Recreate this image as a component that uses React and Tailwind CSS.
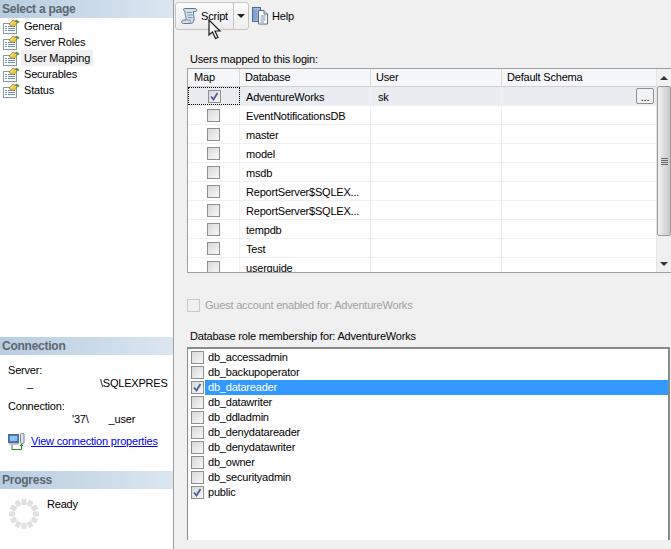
import React from 'react';

const pages = ['General', 'Server Roles', 'User Mapping', 'Securables', 'Status'];
const databases = ['AdventureWorks', 'EventNotificationsDB', 'master', 'model', 'msdb', 'ReportServer$SQLEX...', 'ReportServer$SQLEX...', 'tempdb', 'Test', 'userguide'];
const roles = ['db_accessadmin', 'db_backupoperator', 'db_datareader', 'db_datawriter', 'db_ddladmin', 'db_denydatareader', 'db_denydatawriter', 'db_owner', 'db_securityadmin', 'public'];

// small property page glyph from the sidebar
const PageIcon = () => (
  <svg width="17" height="15" viewBox="0 0 17 15" className="shrink-0">
    <rect x="0.5" y="4.5" width="13" height="10" fill="#fff" stroke="#8a97a8" />
    <path d="M2 7.5h2M5 7.5h7M2 9.5h2M5 9.5h7M2 11.5h2M5 11.5h7" stroke="#6f8fc0" />
    <path d="M6 5.5L10 1L14.5 3.5L10.5 8Z" fill="#f2c63e" stroke="#8a7326" strokeWidth="0.7" />
    <path d="M7.5 5L10.5 2" stroke="#fff3b0" />
    <path d="M13 0.5L16.5 2.5L15 4.5L12 2.5Z" fill="#4f9a3a" />
  </svg>
);

const ScriptIcon = () => (
  <svg width="17" height="18" viewBox="0 0 17 18">
    <path d="M3.5 1.5H14C16 1.5 16.5 4.5 14.5 4.5H12.5C12 7 13.5 10 13 13C12.7 15 11.5 16.5 9.5 16.5H2.5C0 16.5 0 13 2.5 13H5C5.5 10 3.5 7 4 4.5C2.5 4 2 1.5 3.5 1.5Z" fill="#d5dee8" stroke="#5f7690" />
    <path d="M6 5.5H11M6.5 8H11.5M7 10.5H11.5M5.5 13H9.5C9 14 9 15.5 9.5 16.5" fill="none" stroke="#7f95ad" />
  </svg>
);

const HelpIcon = () => (
  <svg width="17" height="18" viewBox="0 0 17 18">
    <rect x="0.5" y="0.5" width="8" height="14" fill="#9db7dc" stroke="#4a6a9c" />
    <path d="M2 2.5V13M4 2.5V13" stroke="#6d8cbc" />
    <path d="M6.5 3.5H12L15.5 7V17H6.5Z" fill="#fff" stroke="#5a6a80" />
    <path d="M12 3.5V7H15.5" fill="#dfe6f0" stroke="#5a6a80" />
    <path d="M8.5 9H13.5M8.5 11H13.5M8.5 13H13.5M8.5 15H12" stroke="#8090a8" />
  </svg>
);

const Cursor = () => (
  <svg width="15" height="21" viewBox="0 0 15 21" className="absolute left-[208px] top-[19px]">
    <path d="M1 1V16L4.5 13L7.5 19.5L10 18.5L7 12H12Z" fill="#f4f4f4" stroke="#1c1c1c" strokeWidth="1.2" />
  </svg>
);

const ConnectionIcon = () => (
  <svg width="17" height="17" viewBox="0 0 17 17" className="shrink-0">
    <rect x="0.5" y="1.5" width="10" height="8" fill="#3f7fd0" stroke="#59677a" />
    <rect x="2" y="3" width="7" height="5" fill="#8fc0f0" />
    <rect x="1" y="10" width="10" height="2" fill="#b8c0cc" />
    <rect x="12.5" y="0.5" width="3.5" height="10" rx="1" fill="#dfe4ea" stroke="#77818f" />
    <path d="M4 12V16.5H13.5V12" fill="none" stroke="#2d8a2d" />
    <path d="M11.5 13L13.5 10.5L15.5 13Z" fill="#2d8a2d" />
  </svg>
);

const Spinner = () => (
  <svg width="32" height="32" viewBox="0 0 32 32" className="shrink-0">
    {Array.from({ length: 12 }).map((_, i) => (
      <rect key={i} x="13.5" y="1" width="5" height="6" rx="1" fill="#e0e0e0" transform={`rotate(${i * 30} 16 16)`} />
    ))}
  </svg>
);

const Check = ({ checked, disabled }) => (
  <span className={`flex h-[13px] w-[13px] shrink-0 items-center justify-center border ${disabled ? 'border-[#c8c8c8] bg-[#f0f0f0]' : 'border-[#8e8f8f] bg-gradient-to-br from-[#d8d8d8] to-[#f8f8f8]'}`}>
    {checked && (
      <svg width="9" height="9" viewBox="0 0 9 9">
        <path d="M1 4.5L3.5 7.5L7.5 1" fill="none" stroke="#4a5f97" strokeWidth="1.8" />
      </svg>
    )}
  </span>
);

const SectionHeader = ({ children }) => (
  <div className="flex h-[18px] items-center bg-gradient-to-r from-[#b9cde0] to-[#dbe6f1] pl-[2px] text-[12px] font-bold tracking-[-0.25px] text-[#5a6672]">
    {children}
  </div>
);

const Sidebar = () => (
  <aside className="flex h-[549px] w-[173px] shrink-0 flex-col bg-white">
    <SectionHeader>Select a page</SectionHeader>
    <ul className="flex flex-col">
      {pages.map((page) => (
        <li key={page} className="flex h-[16px] items-center gap-[1px] pl-[3px]">
          <PageIcon />
          <span className={`px-[3px] ${page === 'User Mapping' ? 'bg-[#f0f0f0]' : ''}`}>{page}</span>
        </li>
      ))}
    </ul>
    <div className="mt-auto">
      <SectionHeader>Connection</SectionHeader>
      <div className="flex h-[116px] flex-col pl-[8px] pt-[9px]">
        <div className="h-[13px] leading-[13px]">Server:</div>
        <div className="flex h-[13px] leading-[13px]">
          <span className="ml-[19px]">_</span>
          <span className="ml-[67px]">\SQLEXPRES</span>
        </div>
        <div className="mt-[10px] h-[13px] leading-[13px]">Connection:</div>
        <div className="flex h-[13px] leading-[13px]">
          <span className="ml-[64px]">'37\</span>
          <span className="ml-[20px]">_user</span>
        </div>
        <div className="mt-[7px] flex items-center gap-[6px]">
          <ConnectionIcon />
          <a className="text-[#0000ee] underline">View connection properties</a>
        </div>
      </div>
      <SectionHeader>Progress</SectionHeader>
      <div className="flex h-[60px] gap-[7px] pl-[8px] pt-[9px]">
        <Spinner />
        <span className="mt-[-1px] leading-[14px]">Ready</span>
      </div>
    </div>
  </aside>
);

const Toolbar = () => (
  <div className="flex h-[32px] items-center pl-[1px]">
    <div className="flex h-[28px] w-[74px] rounded-[3px] border border-[#c4c4c4] bg-gradient-to-b from-[#fafafa] to-[#eeeeee]">
      <div className="flex w-[58px] items-center gap-[3px] border-r border-[#c4c4c4] pl-[5px]">
        <ScriptIcon />
        <span>Script</span>
      </div>
      <div className="flex flex-1 items-center justify-center">
        <span className="h-0 w-0 border-x-[4px] border-t-[4px] border-x-transparent border-t-[#222]" />
      </div>
    </div>
    <div className="ml-[3px] flex items-center gap-[3px]">
      <HelpIcon />
      <span>Help</span>
    </div>
  </div>
);

const MappingGrid = () => (
  <div className="ml-[13px] flex h-[205px] w-[484px] overflow-hidden border-y border-l border-[#a0a0a0] bg-white">
    <div className="flex min-w-0 flex-1 flex-col">
      <div className="flex h-[18px] shrink-0 border-b border-[#d0d0d0] bg-[#f5f7f9]">
        <div className="w-[52px] border-r border-[#d8d8d8] pl-[6px] leading-[17px]">Map</div>
        <div className="w-[131px] border-r border-[#d8d8d8] pl-[5px] leading-[17px]">Database</div>
        <div className="w-[131px] border-r border-[#d8d8d8] pl-[5px] leading-[17px]">User</div>
        <div className="flex-1 pl-[5px] leading-[17px]">Default Schema</div>
      </div>
      {databases.map((db, i) => (
        <div key={db + i} className={`flex h-[19px] shrink-0 border-b border-[#f0f0f0] ${i === 0 ? 'bg-[#e9edf1]' : ''}`}>
          <div className={`flex w-[52px] items-center justify-center ${i === 0 ? 'border border-dotted border-black' : 'border-r border-[#f0f0f0]'}`}>
            <Check checked={i === 0} />
          </div>
          <div className="w-[131px] truncate border-r border-[#f0f0f0] pl-[6px] leading-[20px]">{db}</div>
          <div className="w-[131px] border-r border-[#f0f0f0] pl-[7px] leading-[20px]">{i === 0 ? 'sk' : ''}</div>
          <div className="flex flex-1 items-center justify-end pr-[2px]">
            {i === 0 && (
              <span className="flex h-[16px] w-[18px] items-end justify-center rounded-[2px] border border-[#8e8f8f] bg-[#f2f2f2] text-[11px] leading-[12px]">...</span>
            )}
          </div>
        </div>
      ))}
    </div>
    <div className="flex w-[15px] shrink-0 flex-col items-center border-l border-[#e4e4e4] bg-[#f0f0f0]">
      <div className="flex h-[17px] items-center justify-center">
        <span className="h-0 w-0 border-x-[4px] border-b-[4px] border-x-transparent border-b-[#333]" />
      </div>
      <div className="flex h-[150px] w-[14px] flex-col items-center justify-center gap-[1px] rounded-[2px] border border-[#979797] bg-gradient-to-r from-[#f2f2f2] to-[#c8c8c8]">
        <span className="h-[1px] w-[7px] bg-[#666]" />
        <span className="h-[1px] w-[7px] bg-[#666]" />
        <span className="h-[1px] w-[7px] bg-[#666]" />
        <span className="h-[1px] w-[7px] bg-[#666]" />
      </div>
      <div className="mt-auto flex h-[17px] items-center justify-center">
        <span className="h-0 w-0 border-x-[4px] border-t-[4px] border-x-transparent border-t-[#333]" />
      </div>
    </div>
  </div>
);

const RoleList = () => (
  <div className="ml-[13px] flex h-[193px] w-[483px] flex-col border-t-2 border-r-2 border-l border-[#8a8a8a] bg-white pl-[3px] pt-[1px]">
    {roles.map((role) => {
      const checked = role === 'db_datareader' || role === 'public';
      return (
        <div key={role} className="flex h-[15px] items-center gap-[1px]">
          <Check checked={checked} />
          <span className={`h-[15px] flex-1 pl-[3px] leading-[15px] ${role === 'db_datareader' ? 'bg-[#3399ff] text-white' : ''}`}>{role}</span>
        </div>
      );
    })}
  </div>
);

export default function App() {
  return (
    <div className="relative flex h-[549px] w-[671px] overflow-hidden bg-[#f0f0f0] font-['Liberation_Sans',sans-serif] text-[11px] tracking-[-0.2px] text-black">
      <Sidebar />
      <main className="flex min-w-0 flex-1 flex-col border-l border-[#a0a0a0]">
        <Toolbar />
        <div className="ml-[16px] mt-[20px] h-[16px] leading-[14px]">Users mapped to this login:</div>
        <MappingGrid />
        <div className="ml-[13px] mt-[26px] flex h-[13px] items-center gap-[5px] text-[#a0a0a0]">
          <Check disabled />
          <span>Guest account enabled for: AdventureWorks</span>
        </div>
        <div className="ml-[16px] mt-[17px] h-[18px] leading-[14px]">Database role membership for: AdventureWorks</div>
        <RoleList />
      </main>
      <Cursor />
    </div>
  );
}
